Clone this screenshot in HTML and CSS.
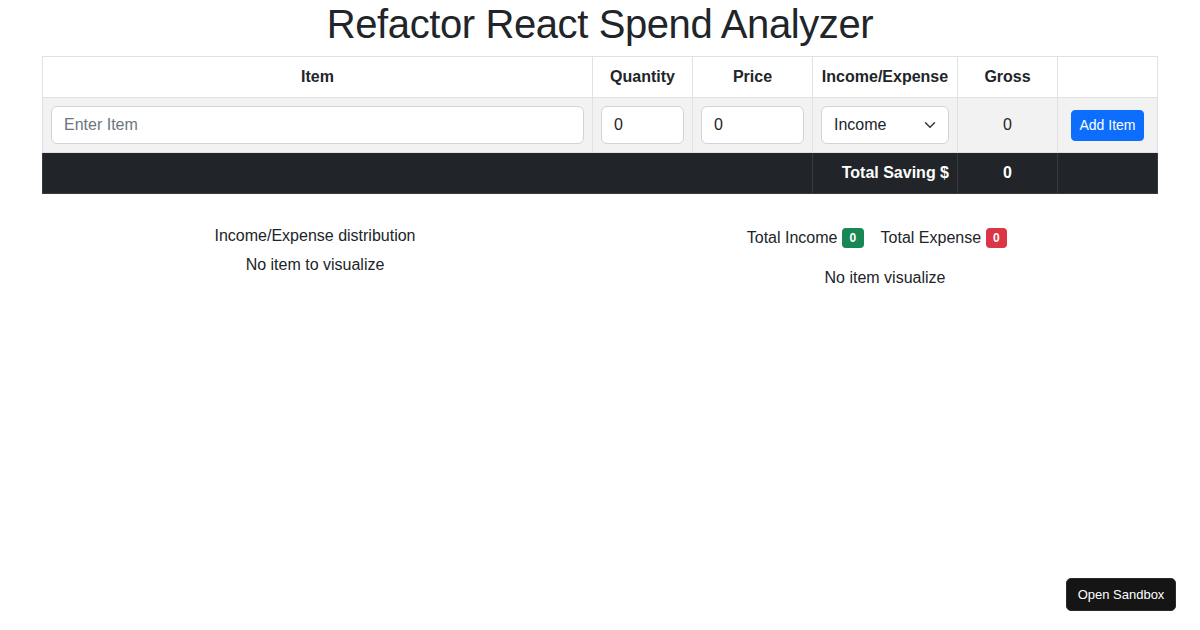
FILE: index.html
```html
<!DOCTYPE html>
<html>
<head>
<meta charset="utf-8">
<link rel="stylesheet" href="styles.css">
</head>
<body>
<div class="container">
  <h1 class="title">Refactor React Spend Analyzer</h1>
  <table class="tbl">
    <colgroup>
      <col class="c-item"><col class="c-qty"><col class="c-price"><col class="c-type"><col class="c-gross"><col class="c-act">
    </colgroup>
    <thead>
      <tr><th>Item</th><th>Quantity</th><th>Price</th><th>Income/Expense</th><th>Gross</th><th></th></tr>
    </thead>
    <tbody>
      <tr class="stripe">
        <td><input class="field" type="text" placeholder="Enter Item"></td>
        <td><input class="field" type="text" value="0"></td>
        <td><input class="field" type="text" value="0"></td>
        <td>
          <div class="select">
            <span>Income</span>
            <svg width="16" height="16" viewBox="0 0 16 16"><path d="M2 5l6 6 6-6" fill="none" stroke="#343a40" stroke-width="2" stroke-linecap="round" stroke-linejoin="round"/></svg>
          </div>
        </td>
        <td class="center">0</td>
        <td class="center"><button class="btn-add">Add Item</button></td>
      </tr>
    </tbody>
    <tfoot>
      <tr class="dark">
        <td colspan="3"></td>
        <td class="right bold">Total Saving $</td>
        <td class="center bold">0</td>
        <td></td>
      </tr>
    </tfoot>
  </table>
  <div class="row">
    <div class="col">
      <div class="chart-title">Income/Expense distribution</div>
      <div class="empty-left">No item to visualize</div>
    </div>
    <div class="col">
      <div class="totals">
        <span>Total Income <span class="badge green">0</span></span>
        <span>Total Expense <span class="badge red">0</span></span>
      </div>
      <div class="empty-right">No item visualize</div>
    </div>
  </div>
</div>
<button class="sandbox">Open Sandbox</button>
</body>
</html>
```

FILE: styles.css
```css
* { box-sizing: border-box; }
html, body { margin: 0; padding: 0; }
body {
  font-family: "Liberation Sans", Arial, sans-serif;
  font-size: 16px;
  line-height: 1.5;
  color: #212529;
  background: #fff;
}
.container {
  width: 1116px;
  margin: 0 auto;
}
.title {
  margin: 0 0 8px 0;
  font-size: 40px;
  font-weight: 400;
  line-height: 48px;
  letter-spacing: -0.4px;
  text-align: center;
}
.tbl {
  width: 1115px;
  border-collapse: collapse;
  table-layout: fixed;
  margin-bottom: 16px;
}
.c-item { width: 550px; }
.c-qty { width: 100px; }
.c-price { width: 120px; }
.c-type { width: 145px; }
.c-gross { width: 100px; }
.c-act { width: 100px; }
.tbl th, .tbl td {
  border: 1px solid #dee2e6;
  padding: 8px;
  vertical-align: middle;
}
.tbl th {
  font-weight: 700;
  text-align: center;
  height: 41px;
}
.stripe td { background: #f2f2f2; }
.field {
  display: block;
  width: 100%;
  height: 38px;
  padding: 6px 12px;
  font: inherit;
  font-size: 16px;
  color: #212529;
  background: #fff;
  border: 1px solid #ced4da;
  border-radius: 6px;
}
.field::placeholder { color: #6c757d; }
.select {
  display: flex;
  align-items: center;
  justify-content: space-between;
  height: 38px;
  padding: 0 12px;
  background: #fff;
  border: 1px solid #ced4da;
  border-radius: 6px;
}
.select svg { width: 12px; height: 12px; }
.center { text-align: center; }
.right { text-align: right; }
.bold { font-weight: 700; }
.btn-add {
  height: 31px;
  padding: 4px 7px;
  font: inherit;
  font-size: 14px;
  line-height: 21px;
  color: #fff;
  background: #0d6efd;
  border: 1px solid #0d6efd;
  border-radius: 4px;
}
.dark td {
  background: #212529;
  color: #fff;
  border-color: #373b3e;
  height: 40px;
}
.row {
  display: flex;
  gap: 24px;
}
.col {
  flex: 1;
  text-align: center;
}
.chart-title { margin-top: 14px; }
.empty-left { margin-top: 5px; }
.totals {
  display: flex;
  justify-content: center;
  gap: 17px;
  margin-top: 16px;
  padding-right: 16px;
}
.badge {
  display: inline-block;
  padding: 4px 7.5px;
  font-size: 12px;
  font-weight: 700;
  line-height: 1;
  color: #fff;
  border-radius: 4px;
  vertical-align: 1px;
}
.green { background: #198754; }
.red { background: #dc3545; }
.empty-right { margin-top: 16px; }
.sandbox {
  position: fixed;
  right: 24px;
  bottom: 19px;
  width: 110px;
  height: 33px;
  font-family: "Liberation Sans", Arial, sans-serif;
  font-size: 13px;
  color: #fff;
  background: #151515;
  border: 1px solid #2a2a2a;
  border-radius: 5px;
}
```
